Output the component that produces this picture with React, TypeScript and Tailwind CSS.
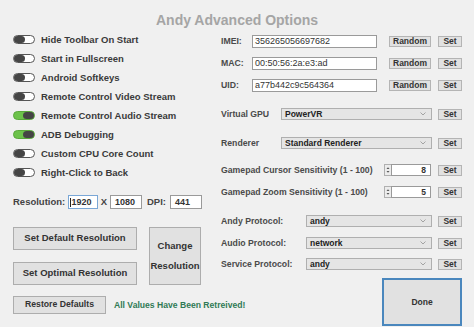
import React from "react";

const F = "font-['Liberation_Sans',Arial,sans-serif]";

function Toggle({ on }: { on?: boolean }) {
  return (
    <div
      className={
        "w-[22px] h-[9px] rounded-full border flex " +
        (on ? "bg-[#6cc24a] border-[#5aa83c] justify-end" : "bg-white border-[#555] justify-start")
      }
    >
      <div className="w-[11px] h-full rounded-full bg-[#454545]" />
    </div>
  );
}

function SetBtn({ ml = "ml-[6px]" }: { ml?: string }) {
  return (
    <div
      className={
        ml +
        " w-[24px] h-[11px] bg-[#e1e1e1] border border-[#b4b4b4] flex items-center justify-center text-[8.5px] font-bold text-[#333] leading-none"
      }
    >
      Set
    </div>
  );
}

function Chevron() {
  return (
    <svg width="6" height="4" viewBox="0 0 6 4" className="shrink-0">
      <path d="M0.5 0.5 L3 3 L5.5 0.5" fill="none" stroke="#9a9a9a" strokeWidth="0.9" />
    </svg>
  );
}

function Select({ w, value }: { w: string; value: string }) {
  return (
    <div
      className={
        w +
        " h-full bg-[#e5e5e5] border border-[#afafaf] flex items-center justify-between pl-[3px] pr-[5px] text-[8.5px] font-bold text-[#222] leading-none"
      }
    >
      <span>{value}</span>
      <Chevron />
    </div>
  );
}

function Label({ w, children }: { w: string; children: React.ReactNode }) {
  return (
    <div className={w + " shrink-0 text-[8.7px] font-bold text-[#4a4a4a] leading-none whitespace-nowrap"}>
      {children}
    </div>
  );
}

function IdRow({ label, value, mt }: { label: string; value: string; mt: string }) {
  return (
    <div className={mt + " h-[13px] flex items-center"}>
      <Label w="w-[31px]">{label}</Label>
      <div className="w-[125px] h-full bg-white border border-[#9a9a9a] flex items-center pl-[2px] text-[9px] text-[#333] leading-none">
        {value}
      </div>
      <div className="ml-[12px] w-[42px] h-[11px] bg-[#e1e1e1] border border-[#b4b4b4] flex items-center justify-center text-[8.5px] font-bold text-[#333] leading-none">
        Random
      </div>
      <SetBtn ml="ml-[7px]" />
    </div>
  );
}

function Spinner() {
  return (
    <div className="w-[7px] h-full bg-[#ececec] border border-[#b0b0b0] border-r-0 flex items-center justify-center">
      <svg width="4" height="8" viewBox="0 0 4 8">
        <path d="M0.5 3 L2 1.3 L3.5 3 Z" fill="#555" />
        <path d="M0.5 5 L2 6.7 L3.5 5 Z" fill="#555" />
      </svg>
    </div>
  );
}

function NumRow({ label, value, mt }: { label: string; value: string; mt: string }) {
  return (
    <div className={mt + " h-[12px] flex items-center"}>
      <Label w="w-[163px]">{label}</Label>
      <Spinner />
      <div className="w-[40px] h-full bg-white border border-[#9a9a9a] flex items-center justify-end pr-[4px] text-[8.5px] font-bold text-[#333] leading-none">
        {value}
      </div>
      <SetBtn ml="ml-[7px]" />
    </div>
  );
}

function Btn({ className, children }: { className: string; children: React.ReactNode }) {
  return (
    <div
      className={
        className +
        " shrink-0 bg-[#e1e1e1] border border-[#adadad] flex items-center justify-center font-bold text-[#333] text-center whitespace-nowrap"
      }
    >
      {children}
    </div>
  );
}

const toggles: [string, boolean][] = [
  ["Hide Toolbar On Start", false],
  ["Start in Fullscreen", false],
  ["Android Softkeys", false],
  ["Remote Control Video Stream", false],
  ["Remote Control Audio Stream", true],
  ["ADB Debugging", true],
  ["Custom CPU Core Count", false],
  ["Right-Click to Back", false],
];

export default function App() {
  return (
    <div className={F + " w-[474px] h-[327px] bg-[#f0f0f0] overflow-hidden flex flex-col"}>
      <div className="pt-[12px] h-[28px] text-center text-[14px] leading-[16px] font-bold text-[#a5a5a5]">
        Andy Advanced Options
      </div>
      <div className="flex">
        {/* Left column */}
        <div className="w-[221px] shrink-0 pl-[13px] flex flex-col">
          <div className="mt-[2px] flex flex-col">
            {toggles.map(([t, on]) => (
              <div key={t} className="h-[19px] flex items-center gap-[6px]">
                <Toggle on={on} />
                <span className="text-[9.5px] font-bold text-[#3a3a3a] leading-none whitespace-nowrap">{t}</span>
              </div>
            ))}
          </div>
          <div className="mt-[13px] h-[14px] flex items-center text-[9.5px] font-bold text-[#444] leading-none">
            <span className="w-[55px]">Resolution:</span>
            <div className="w-[30px] h-full bg-white border border-[#7aa7d6] flex items-center pl-[1px] text-[9px] text-[#333]">
              <span className="w-px h-[9px] bg-[#222] mr-[0.5px]" />
              1920
            </div>
            <span className="w-[12px] text-center">X</span>
            <div className="w-[32px] h-full bg-white border border-[#9a9a9a] flex items-center pl-[4px] text-[9px] text-[#333]">
              1080
            </div>
            <span className="ml-[5px] w-[23px]">DPI:</span>
            <div className="w-[32px] h-full bg-white border border-[#9a9a9a] flex items-center pl-[4px] text-[9px] text-[#333]">
              441
            </div>
          </div>
          <div className="mt-[18px] flex">
            <div className="w-[124px] flex flex-col gap-[12px]">
              <Btn className="h-[23px] text-[9.5px]">Set Default Resolution</Btn>
              <Btn className="h-[23px] text-[9.5px]">Set Optimal Resolution</Btn>
            </div>
            <Btn className="ml-[12px] w-[52px] h-[58px] leading-[20px] text-[9.5px]">
              Change
              <br />
              Resolution
            </Btn>
          </div>
          <div className="mt-[11px] flex items-center">
            <Btn className="w-[93px] h-[18px] text-[8.7px]">Restore Defaults</Btn>
            <span className="ml-[8px] whitespace-nowrap text-[8.6px] font-bold text-[#2f7a55] leading-none">
              All Values Have Been Retreived!
            </span>
          </div>
        </div>

        {/* Right column */}
        <div className="flex-1 flex flex-col">
          <IdRow mt="mt-[7px]" label="IMEI:" value="356265056697682" />
          <IdRow mt="mt-[9px]" label="MAC:" value="00:50:56:2a:e3:ad" />
          <IdRow mt="mt-[9px]" label="UID:" value="a77b442c9c564364" />

          <div className="mt-[16px] h-[12px] flex items-center">
            <Label w="w-[60px]">Virtual GPU</Label>
            <Select w="w-[151px]" value="PowerVR" />
            <SetBtn />
          </div>
          <div className="mt-[17px] h-[12px] flex items-center">
            <Label w="w-[60px]">Renderer</Label>
            <Select w="w-[151px]" value="Standard Renderer" />
            <SetBtn />
          </div>

          <NumRow mt="mt-[15px]" label="Gamepad Cursor Sensitivity (1 - 100)" value="8" />
          <NumRow mt="mt-[10px]" label="Gamepad Zoom Sensitivity (1 - 100)" value="5" />

          <div className="mt-[17px] h-[12px] flex items-center">
            <Label w="w-[85px]">Andy Protocol:</Label>
            <Select w="w-[126px]" value="andy" />
            <SetBtn />
          </div>
          <div className="mt-[10px] h-[12px] flex items-center">
            <Label w="w-[85px]">Audio Protocol:</Label>
            <Select w="w-[126px]" value="network" />
            <SetBtn />
          </div>
          <div className="mt-[9px] h-[12px] flex items-center">
            <Label w="w-[85px]">Service Protocol:</Label>
            <Select w="w-[126px]" value="andy" />
            <SetBtn />
          </div>

          <div className="mt-[8px] ml-[161px] w-[80px] h-[48px] bg-[#e1e1e1] border-2 border-[#4a87bd] flex items-center justify-center text-[8.5px] font-bold text-[#333]">
            Done
          </div>
        </div>
      </div>
    </div>
  );
}
